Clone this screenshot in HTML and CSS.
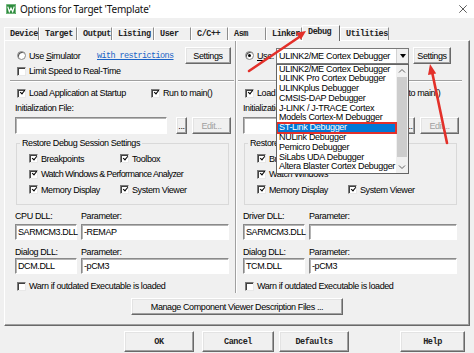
FILE: index.html
```html
<!DOCTYPE html>
<html>
<head>
<meta charset="utf-8">
<title>Options for Target 'Template'</title>
<link rel="stylesheet" href="styles.css">
</head>
<body>
<div class="win">
  <div class="titlebar">
    <svg class="appicon" viewBox="0 0 10 10"><rect x="0" y="0" width="10" height="10" fill="#2e8b3e"/><rect x="0.5" y="0.5" width="9" height="9" fill="none" stroke="#9fd4a6" stroke-width="0.6"/><path d="M1.8 2.6 L3.3 7.6 L5 4.2 L6.7 7.6 L8.2 2.6" stroke="#fff" stroke-width="1.2" fill="none"/></svg>
    <span class="title">Options for Target 'Template'</span>
    <svg class="close" viewBox="0 0 8 8"><path d="M0.3 0.3 L7.7 7.7 M7.7 0.3 L0.3 7.7" stroke="#333" stroke-width="0.8"/></svg>
  </div>

  <div class="tabs">
    <span class="tab">Device</span>
    <span class="tab">Target</span>
    <span class="tab">Output</span>
    <span class="tab">Listing</span>
    <span class="tab">User</span>
    <span class="tab">C/C++</span>
    <span class="tab">Asm</span>
    <span class="tab">Linker</span>
    <span class="tab active">Debug</span>
    <span class="tab">Utilities</span>
  </div>

  <div class="panel">
    <div class="cols">
      <!-- LEFT COLUMN -->
      <div class="col">
        <div class="r1">
          <span class="ck first"><i class="rb"></i><span class="simlbl">Use <u>S</u>imulator</span></span>
          <span class="link">with restrictions</span>
          <span class="btn set-l">Settings</span>
        </div>
        <div class="r2"><span class="ck first"><i class="cb"></i>Limit Speed to Real-Time</span></div>
        <div class="sep"></div>
        <div class="r4">
          <span class="ck first load"><i class="cb on"></i>Load Application at Startup</span>
          <span class="ck"><i class="cb on"></i>Run to main()</span>
        </div>
        <div class="r5"><span class="lbl">Initialization File:</span></div>
        <div class="r6">
          <span class="inp init"></span>
          <span class="btn dots">...</span>
          <span class="btn edit">Edit...</span>
        </div>
        <fieldset class="grp">
          <legend>Restore Debug Session Settings</legend>
          <div class="grow"><span class="ck gfirst"><i class="cb on"></i>Breakpoints</span><span class="ck"><i class="cb on"></i>Toolbox</span></div>
          <div class="grow mid"><span class="ck watch"><i class="cb on"></i>Watch Windows &amp; Performance Analyzer</span></div>
          <div class="grow"><span class="ck gfirst"><i class="cb on"></i>Memory Display</span><span class="ck"><i class="cb on"></i>System Viewer</span></div>
        </fieldset>
        <div class="r8"><span class="lbl dl">CPU DLL:</span><span class="lbl">Parameter:</span></div>
        <div class="r9"><span class="inp in1">SARMCM3.DLL</span><span class="inp in2">-REMAP</span></div>
        <div class="r10"><span class="lbl dl">Dialog DLL:</span><span class="lbl">Parameter:</span></div>
        <div class="r11"><span class="inp in1">DCM.DLL</span><span class="inp in2">-pCM3</span></div>
        <div class="r12"><span class="ck first"><i class="cb"></i>Warn if outdated Executable is loaded</span></div>
      </div>

      <div class="divider"></div>

      <!-- RIGHT COLUMN -->
      <div class="col right">
        <div class="r1">
          <span class="ck first"><i class="rb on"></i><span class="uselbl"><u>U</u>se:</span></span>
          <div class="combo">
            <span class="ctext">ULINK2/ME Cortex Debugger</span>
            <span class="carr"><i class="tri"></i></span>
            <div class="list">
              <div class="items">
                <div class="it">ULINK2/ME Cortex Debugger</div>
                <div class="it">ULINK Pro Cortex Debugger</div>
                <div class="it">ULINKplus Debugger</div>
                <div class="it">CMSIS-DAP Debugger</div>
                <div class="it">J-LINK / J-TRACE Cortex</div>
                <div class="it">Models Cortex-M Debugger</div>
                <div class="it sel">ST-Link Debugger</div>
                <div class="it">NULink Debugger</div>
                <div class="it">Pemicro Debugger</div>
                <div class="it">SiLabs UDA Debugger</div>
                <div class="it">Altera Blaster Cortex Debugger</div>
              </div>
              <div class="sb">
                <svg class="chev" viewBox="0 0 12 12"><path d="M3 7.5 L6 4.5 L9 7.5" stroke="#606060" stroke-width="1" fill="none"/></svg>
                <div class="thumb"></div>
                <div class="track"></div>
                <svg class="chev" viewBox="0 0 12 12"><path d="M3 4.5 L6 7.5 L9 4.5" stroke="#606060" stroke-width="1" fill="none"/></svg>
              </div>
            </div>
          </div>
          <span class="btn set-r">Settings</span>
        </div>
        <div class="r2"></div>
        <div class="sep"></div>
        <div class="r4">
          <span class="ck first load"><i class="cb on"></i>Load Application at Startup</span>
          <span class="ck"><i class="cb on"></i>Run to main()</span>
        </div>
        <div class="r5"><span class="lbl">Initialization File:</span></div>
        <div class="r6">
          <span class="inp init"></span>
          <span class="btn dots">...</span>
          <span class="btn edit">Edit...</span>
        </div>
        <fieldset class="grp">
          <legend>Restore Debug Session Settings</legend>
          <div class="grow"><span class="ck gfirst"><i class="cb on"></i>Breakpoints</span><span class="ck"><i class="cb on"></i>Tracepoints</span></div>
          <div class="grow mid"><span class="ck gfirst"><i class="cb on"></i>Watch Windows</span></div>
          <div class="grow"><span class="ck gfirst"><i class="cb on"></i>Memory Display</span><span class="ck"><i class="cb on"></i>System Viewer</span></div>
        </fieldset>
        <div class="r8"><span class="lbl dl">Driver DLL:</span><span class="lbl">Parameter:</span></div>
        <div class="r9"><span class="inp in1">SARMCM3.DLL</span><span class="inp in2"></span></div>
        <div class="r10"><span class="lbl dl">Dialog DLL:</span><span class="lbl">Parameter:</span></div>
        <div class="r11"><span class="inp in1">TCM.DLL</span><span class="inp in2">-pCM3</span></div>
        <div class="r12"><span class="ck first"><i class="cb"></i>Warn if outdated Executable is loaded</span></div>
      </div>
    </div>
    <div class="manage-row"><span class="btn manage">Manage Component Viewer Description Files ...</span></div>
  </div>

  <div class="footer">
    <span class="btn fb ok">OK</span>
    <span class="btn fb cancel">Cancel</span>
    <span class="btn fb defaults">Defaults</span>
    <span class="btn fb help">Help</span>
  </div>

  <svg class="arrows" viewBox="0 0 474 353">
    <line x1="249" y1="71" x2="300" y2="36.5" stroke="#e3302a" stroke-width="2.6" stroke-linecap="round"/>
    <polygon points="306,31 300.9,39.8 296.1,32.7" fill="#e3302a"/>
    <line x1="447" y1="143" x2="432.5" y2="74" stroke="#e3302a" stroke-width="2.6" stroke-linecap="round"/>
    <polygon points="430,64 436.2,73.4 428,75" fill="#e3302a"/>
  </svg>
</div>
</body>
</html>
```

FILE: styles.css
```css
* { box-sizing: border-box; margin: 0; padding: 0; }

body {
  width: 474px;
  height: 353px;
  overflow: hidden;
  background: #f0f0f0;
  font-family: "Liberation Sans", Arial, sans-serif;
  font-size: 9px;
  letter-spacing: -0.4px;
  color: #000;
}

.win { position: relative; width: 474px; height: 353px; }

/* title bar */
.titlebar {
  height: 18px;
  background: #fff;
  display: flex;
  align-items: center;
  padding-left: 6px;
}
.appicon { width: 10px; height: 10px; flex: none; }
.title {
  margin-left: 4px;
  font-family: "Noto Sans", "Liberation Sans", sans-serif;
  font-size: 10px;
  letter-spacing: -0.2px;
  color: #111;
}
.close { margin-left: auto; margin-right: 7px; width: 8px; height: 8px; }

/* tabs */
.tabs {
  height: 22px;
  display: flex;
  align-items: flex-end;
  padding-left: 4px;
  font-family: "Liberation Mono", "DejaVu Sans Mono", monospace;
  font-size: 8.5px;
  letter-spacing: -0.45px;
  font-weight: bold;
  color: #222;
}
.tab {
  height: 13px;
  line-height: 12px;
  padding-left: 5px;
  border-top: 1px solid #fff;
  border-left: 1px solid #fff;
  border-right: 1px solid #8c8c8c;
  white-space: nowrap;
  overflow: hidden;
}
.tab:nth-child(1) { width: 35px; }
.tab:nth-child(2) { width: 38px; }
.tab:nth-child(3) { width: 35px; }
.tab:nth-child(4) { width: 42px; }
.tab:nth-child(5) { width: 37px; }
.tab:nth-child(6) { width: 37px; }
.tab:nth-child(7) { width: 38px; }
.tab:nth-child(8) { width: 36px; }
.tab:nth-child(9) { width: 38px; }
.tab:nth-child(10) { width: 49px; }
.tab.active {
  height: 16px;
  line-height: 13px;
  margin-bottom: -1px;
  position: relative;
  z-index: 2;
  background: #f0f0f0;
  border-right-color: #696969;
}

/* panel */
.panel {
  margin-left: 4px;
  width: 466px;
  height: 286px;
  border: 1px solid;
  border-color: #fff #696969 #696969 #fff;
  box-shadow: inset -1px -1px #a0a0a0;
}
.cols { display: flex; padding-left: 5px; }
.col { width: 224px; padding-top: 6px; padding-bottom: 1px; }
.divider {
  width: 2px;
  margin: 0 1px;
  border-left: 1px solid #a0a0a0;
  border-right: 1px solid #fff;
}

.r1, .r2, .r4, .r5, .r6, .r8, .r9, .r10, .r11, .r12 {
  display: flex;
  align-items: center;
}
.r1 { height: 17px; }
.r2 { height: 12px; margin-top: 1px; }
.sep {
  height: 2px;
  margin-top: 3px;
  border-top: 1px solid #a0a0a0;
  border-bottom: 1px solid #fff;
}
.r4 { height: 12px; margin-top: 5px; }
.r5 { height: 12px; margin-top: 3px; }
.r6 { height: 17px; margin-top: 3px; }
.r8 { height: 12px; margin-top: 5px; }
.r9 { height: 16px; margin-top: 2px; }
.r10 { height: 12px; margin-top: 6px; }
.r11 { height: 16px; }
.r12 { height: 12px; margin-top: 6px; }

/* check / radio items */
.ck { display: flex; align-items: center; white-space: nowrap; }
.ck.first { margin-left: 7px; }
.load { width: 134px; }
.simlbl { width: 68px; }
.uselbl { width: 19px; }
.watch { letter-spacing: -0.6px; }

.cb {
  width: 9px;
  height: 9px;
  flex: none;
  margin-right: 3px;
  position: relative;
  background: #fff;
  border: 1px solid;
  border-color: #7a7a7a #e8e8e8 #e8e8e8 #7a7a7a;
  box-shadow: inset 1px 1px #404040;
}
.cb.on::after {
  content: "";
  position: absolute;
  left: 1.5px;
  top: 0.5px;
  width: 4px;
  height: 2px;
  border-left: 1.6px solid #000;
  border-bottom: 1.6px solid #000;
  transform: rotate(-50deg);
}
.rb {
  width: 9px;
  height: 9px;
  flex: none;
  margin-right: 3px;
  position: relative;
  border-radius: 50%;
  background: #fff;
  border: 1px solid #888;
  box-shadow: inset 1px 1px #555;
}
.rb.on::after {
  content: "";
  position: absolute;
  left: 2px;
  top: 2px;
  width: 3px;
  height: 3px;
  border-radius: 50%;
  background: #000;
}

.link {
  width: 88px;
  font-family: "Liberation Mono", "DejaVu Sans Mono", monospace;
  font-size: 8.5px;
  letter-spacing: -0.6px;
  color: #1a63c6;
  text-decoration: underline;
  white-space: nowrap;
}

.lbl { white-space: nowrap; margin-left: 5px; }
.dl { width: 61px; }
.lbl.dl + .lbl { margin-left: 5px; }

/* buttons */
.btn {
  display: flex;
  align-items: center;
  justify-content: center;
  white-space: nowrap;
  background: #f0f0f0;
  border: 1px solid;
  border-color: #fff #696969 #696969 #fff;
  box-shadow: inset -1px -1px #a0a0a0, inset 1px 1px #e3e3e3;
}
.set-l { width: 46px; height: 17px; }
.set-r { width: 38px; height: 17px; margin-left: 4px; }
.dots { width: 11px; height: 17px; margin-left: 9px; }
.edit { width: 39px; height: 17px; margin-left: 5px; color: #a0a0a0; }

/* inputs */
.inp {
  display: block;
  height: 16px;
  line-height: 14px;
  padding-left: 2px;
  white-space: nowrap;
  background: #fff;
  border: 1px solid;
  border-color: #8a8a8a #fff #fff #8a8a8a;
  box-shadow: inset 1px 1px #b4b4b4;
}
.init { width: 152px; height: 17px; margin-left: 5px; }
.in1 { width: 62px; margin-left: 5px; }
.in2 { width: 148px; margin-left: 4px; }

/* group */
.grp {
  margin: 3px 0 0 6px;
  width: 213px;
  height: 68px;
  border: 1px solid #d9d9d9;
  padding: 2px 0 0 3px;
}
.grp legend { padding: 0 2px; line-height: 12px; }
.grow { display: flex; align-items: center; height: 15px; margin-left: 9px; }
.grow.mid { height: 16px; }
.gfirst { width: 91px; }

/* combo + dropdown list */
.combo {
  position: relative;
  width: 133px;
  height: 16px;
  display: flex;
  align-items: center;
  padding-left: 2px;
  background: #fff;
  border: 1px solid #7a7a7a;
  letter-spacing: -0.3px;
}
.ctext { white-space: nowrap; }
.carr {
  margin-left: auto;
  width: 12px;
  height: 14px;
  display: flex;
  align-items: center;
  justify-content: center;
  background: #f0f0f0;
  border-left: 1px solid #d2d2d2;
}
.tri {
  width: 0;
  height: 0;
  border-left: 3.5px solid transparent;
  border-right: 3.5px solid transparent;
  border-top: 4px solid #000;
}
.list {
  position: absolute;
  left: -1px;
  top: 15px;
  width: 133px;
  height: 110px;
  display: flex;
  background: #fff;
  border: 1px solid #646464;
  overflow: hidden;
  z-index: 5;
}
.items { width: 119px; }
.it {
  height: 9.8px;
  line-height: 9.8px;
  padding-left: 2px;
  white-space: nowrap;
  letter-spacing: -0.3px;
}
.it.sel {
  background: #0078d7;
  color: #fff;
  outline: 2px solid #e3302a;
  outline-offset: -1px;
  position: relative;
}
.sb {
  width: 12px;
  display: flex;
  flex-direction: column;
  background: #f0f0f0;
}
.chev { width: 12px; height: 12px; flex: none; }
.thumb { height: 80px; background: #cdcdcd; margin: 0 1px; }
.track { flex: 1; }

/* manage button */
.manage-row { margin-top: 5px; padding-left: 126px; }
.manage { width: 212px; height: 17px; }

/* footer buttons */
.footer {
  display: flex;
  margin-top: 5px;
  padding-left: 124px;
  font-family: "Liberation Mono", "DejaVu Sans Mono", monospace;
  font-size: 8.5px;
  letter-spacing: -0.45px;
  font-weight: bold;
}
.fb { height: 21px; color: #222; }
.ok { width: 70px; }
.cancel { width: 72px; margin-left: 8px; }
.defaults { width: 70px; margin-left: 5px; }
.help { width: 65px; margin-left: 51px; }

/* annotation arrows */
.arrows {
  position: absolute;
  left: 0;
  top: 0;
  width: 474px;
  height: 353px;
  pointer-events: none;
  z-index: 10;
}
```
